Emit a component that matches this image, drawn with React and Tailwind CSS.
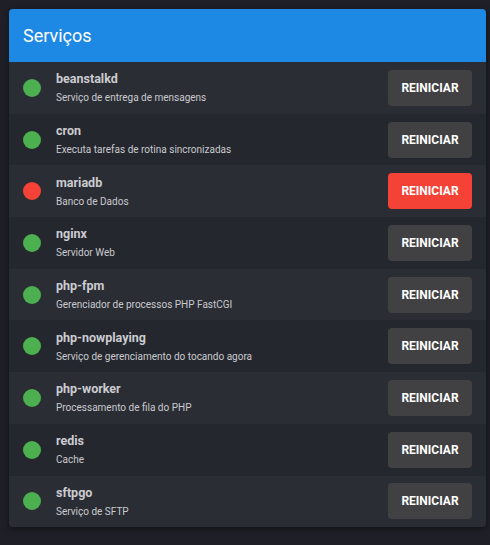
import React from 'react';

const services = [
    { name: 'beanstalkd', desc: 'Serviço de entrega de mensagens', running: true },
    { name: 'cron', desc: 'Executa tarefas de rotina sincronizadas', running: true },
    { name: 'mariadb', desc: 'Banco de Dados', running: false },
    { name: 'nginx', desc: 'Servidor Web', running: true },
    { name: 'php-fpm', desc: 'Gerenciador de processos PHP FastCGI', running: true },
    { name: 'php-nowplaying', desc: 'Serviço de gerenciamento do tocando agora', running: true },
    { name: 'php-worker', desc: 'Processamento de fila do PHP', running: true },
    { name: 'redis', desc: 'Cache', running: true },
    { name: 'sftpgo', desc: 'Serviço de SFTP', running: true },
];

const ServiceRow = ({ service, striped }) => (
    <div className={`h-[51.7px] flex items-center pl-[14px] pr-[14px] ${striped ? 'bg-[#2b2d35]' : 'bg-[#25272f]'}`}>
        <span className={`w-[18px] h-[18px] rounded-full shrink-0 ${service.running ? 'bg-[#4caf50]' : 'bg-[#f44336]'}`} />
        <div className="ml-[15px] flex-1 min-w-0">
            <div className="text-[12.5px] leading-[20px] font-bold text-[#cbccd0]">{service.name}</div>
            <div className="text-[10px] leading-[16px] mt-[1px] text-[#c9cacd]">{service.desc}</div>
        </div>
        <button
            className={`w-[84px] h-[36px] rounded-[4px] text-[12px] font-bold text-white ${service.running ? 'bg-[#414143]' : 'bg-[#f44336]'}`}
        >
            REINICIAR
        </button>
    </div>
);

export default function App() {
    return (
        <div className="min-h-[545px] bg-[#1f2027] pt-[9px] pl-[9px]" style={{ fontFamily: 'Roboto, "Liberation Sans", sans-serif' }}>
            <div className="w-[477px] rounded-[4px] overflow-hidden shadow-[0_2px_6px_rgba(0,0,0,0.45)]">
                <div className="h-[53px] bg-[#1e88e5] flex items-center px-[14px]">
                    <h2 className="text-[18px] text-white">Serviços</h2>
                </div>
                {services.map((s, i) => (
                    <ServiceRow key={s.name} service={s} striped={i % 2 === 0} />
                ))}
            </div>
        </div>
    );
}
